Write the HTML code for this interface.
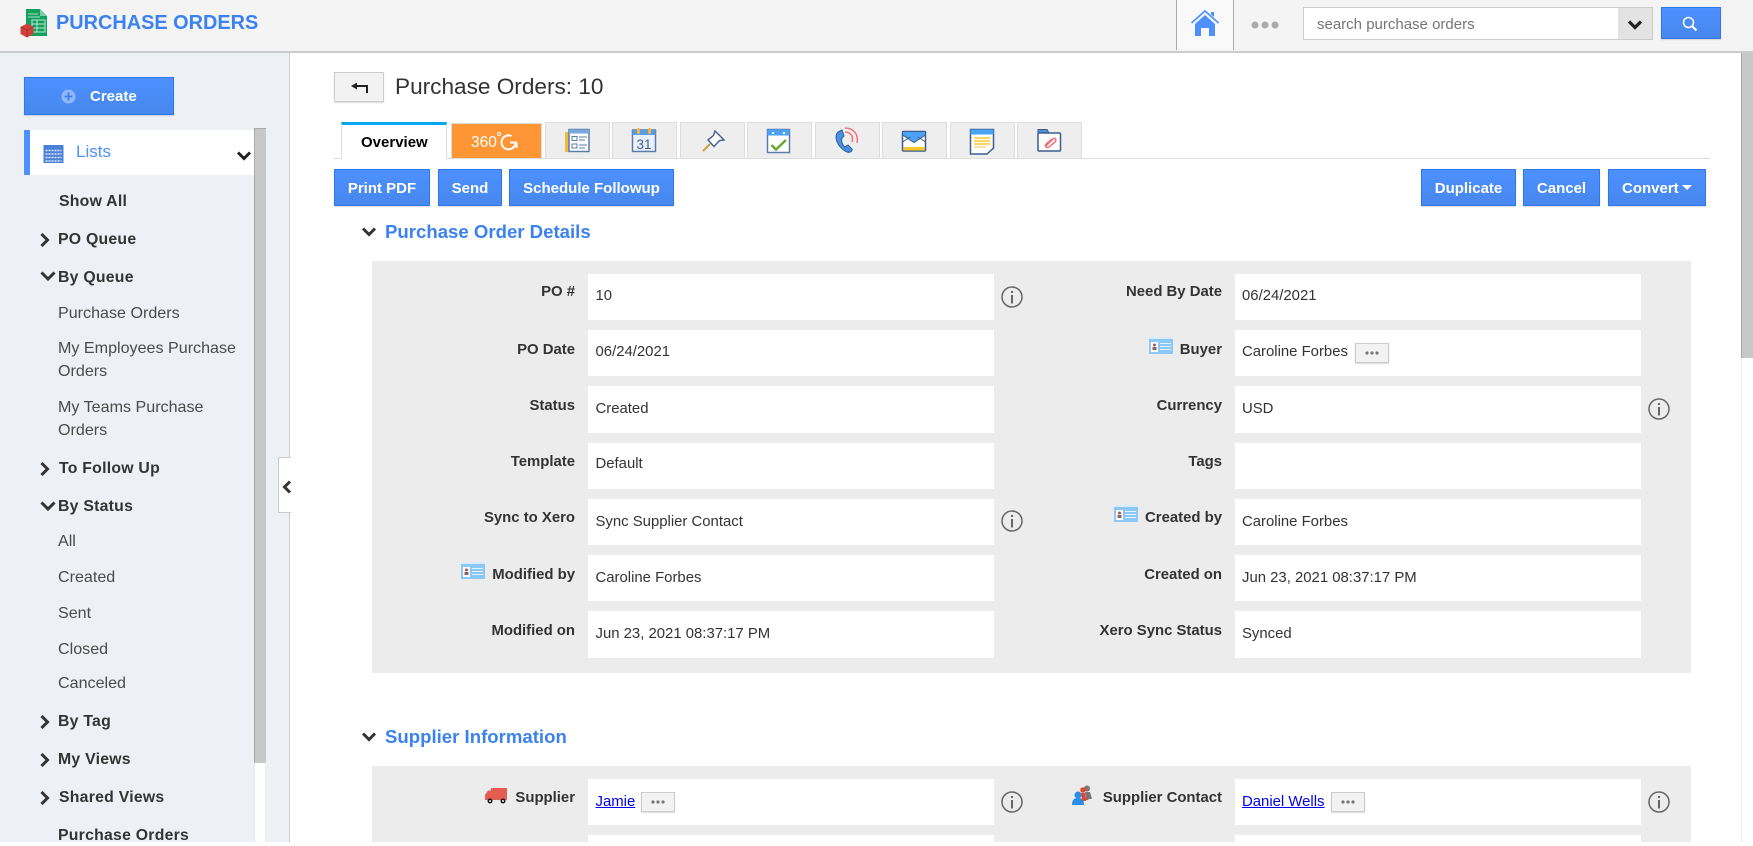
<!DOCTYPE html>
<html><head><meta charset="utf-8"><title>Purchase Orders</title>
<style>
*{box-sizing:border-box}
html,body{margin:0;padding:0;width:1753px;height:842px;overflow:hidden;background:#fff;font-family:"Liberation Sans",Arial,sans-serif;color:#333}
.a{position:absolute}
.t{position:absolute;white-space:nowrap;line-height:20px}
.btn{position:absolute;top:169px;height:37px;background:linear-gradient(#4d90fe,#4787ed);border:1px solid #3079ed;color:#fff;font-weight:bold;font-size:15px;line-height:37px;text-align:center;box-shadow:0 1px 1px rgba(0,0,0,.15)}
.tab{position:absolute;top:122px;height:36px;width:65px;background:#eee;border:1px solid #ddd;border-bottom:0}
.tab svg{position:absolute;left:-1px;top:-1px}
.sb{position:absolute;left:58px;font-weight:bold;font-size:15.8px;line-height:20px;white-space:nowrap;color:#333;letter-spacing:.25px}
.si{position:absolute;left:58px;font-size:16.1px;line-height:20px;white-space:nowrap;color:#4a4a4a}
.ch{position:absolute}
.f{position:absolute;background:#fff;height:46px}
.c1{left:588px;width:406px}
.c2{left:1235px;width:406px}
.v{position:absolute;font-size:14.9px;line-height:20px;white-space:nowrap;color:#333}
.l{position:absolute;font-size:14.9px;font-weight:bold;line-height:20px;white-space:nowrap;color:#333;text-align:right;width:200px}
.l1{left:375px}
.l2{left:1022px}
.v1{left:595.5px}
.v2{left:1242px}
.dots{position:absolute;width:34px;height:20px;background:#f2f2f2;border:1px solid #ccc;box-shadow:0 1px 1px rgba(0,0,0,.15)}
.dots svg{position:absolute;left:9px;top:6px}
.info{position:absolute}
h2{position:absolute;margin:0;font-size:18.6px;font-weight:bold;line-height:24px;color:#3b82f0;white-space:nowrap}
a{color:#00e;text-decoration:underline}
</style></head>
<body>

<!-- header -->
<div class="a" style="left:0;top:0;width:1753px;height:53px;background:#f4f4f4;border-bottom:2px solid #ccc"></div>
<svg class="a" style="left:20px;top:8px" width="28" height="30" viewBox="0 0 28 30">
<path d="M6 1H20L27 8V28H6Z" fill="#12a05c"/><path d="M20 1L27 8H20Z" fill="#7fcca8"/>
<path d="M8 6H18M8 9H20" stroke="#a8e0c4" stroke-width="1"/>
<rect x="12" y="12" width="13" height="12" fill="none" stroke="#bfe9d4" stroke-width="1"/>
<path d="M12 16H25M12 20H25M17 12V24" stroke="#bfe9d4" stroke-width="1"/>
<path d="M0.500 19L7 15.500L13.500 19V26L7 29.500L.5 26Z" fill="#d0423b"/>
<path d="M.5 19L7 22L13.500 19M7 22V29" stroke="#a52a25" stroke-width=".8" fill="none"/>
</svg>
<div class="t" style="left:56px;top:13px;font-size:19.9px;font-weight:bold;color:#3b82f0">PURCHASE ORDERS</div>

<div class="a" style="left:1176px;top:0;width:58px;height:50px;background:#f9f9f9;border-left:1px solid #aaa;border-right:1px solid #aaa"></div>
<svg class="a" style="left:1190px;top:9px" width="30" height="28" viewBox="0 0 30 28">
<path d="M1.500 14L15 2L28.500 14" fill="none" stroke="#4d90fe" stroke-width="1.600"/>
<path d="M21 3H24V8L21 5.500Z" fill="#4d90fe"/>
<path d="M5 15L15 6L25 15V27H19V19H11V27H5Z" fill="#4d90fe"/>
</svg>
<svg class="a" style="left:1251px;top:21px" width="28" height="8" viewBox="0 0 28 8"><circle cx="4" cy="4" r="3.500" fill="#aaa"/><circle cx="14" cy="4" r="3.500" fill="#aaa"/><circle cx="24" cy="4" r="3.500" fill="#aaa"/></svg>
<div class="a" style="left:1303px;top:7px;width:316px;height:33px;background:#fff;border:1px solid #ccc"></div>
<div class="a" style="left:1618px;top:7px;width:35px;height:33px;background:#e3e3e3;border:1px solid #ccc;border-left:0"></div>
<svg class="a" style="left:1627px;top:19px" width="16" height="12" viewBox="0 0 16 12"><path d="M2 2.500L8 8.500L14 2.500" fill="none" stroke="#222" stroke-width="3.200"/></svg>
<div class="t" style="left:1317px;top:15px;font-size:15px;color:#757575">search purchase orders</div>
<div class="a" style="left:1661px;top:7px;width:60px;height:32px;background:linear-gradient(#4d90fe,#4787ed);border:1px solid #3079ed;box-shadow:0 1px 1px rgba(0,0,0,.15)"></div>
<svg class="a" style="left:1682px;top:16px" width="16" height="16" viewBox="0 0 16 16"><circle cx="6.500" cy="6.500" r="5" fill="none" stroke="#fff" stroke-width="1.500"/><path d="M10 10L14.500 14.500" stroke="#fff" stroke-width="2"/></svg>

<!-- sidebar -->
<div class="a" style="left:0;top:53px;width:290px;height:789px;background:#edf0f5;border-right:1px solid #ccc"></div>
<div class="a" style="left:24px;top:77px;width:150px;height:38px;background:linear-gradient(#4d90fe,#4787ed);border:1px solid #3079ed;box-shadow:0 1px 1px rgba(0,0,0,.15)"></div>
<svg class="a" style="left:61px;top:89px" width="15" height="15" viewBox="0 0 15 15"><circle cx="7.500" cy="7.500" r="7" fill="#8fb8fb"/><path d="M7.500 3.500V11.500M3.500 7.500H11.500" stroke="#3f7fe8" stroke-width="1.800"/></svg>
<div class="t" style="left:90px;top:87px;font-size:15px;font-weight:bold;color:#fff">Create</div>

<div class="a" style="left:24px;top:130px;width:230px;height:45px;background:#fff;border-left:6px solid #4d90fe"></div>
<svg class="a" style="left:43px;top:145px" width="21" height="18" viewBox="0 0 21 18"><rect width="20" height="18" x=".5" fill="#4a80d8"/><path d="M2.500 5.500H18.500M2.500 9H18.500M2.500 12.500H18.500M2.500 16H18.500" stroke="#dfe9fb" stroke-width="1.500" stroke-dasharray="2 1"/></svg>
<div class="t" style="left:76px;top:142px;font-size:17px;color:#4d90fe;line-height:20px">Lists</div>
<svg class="a" style="left:236px;top:149px" width="16" height="14" viewBox="0 0 16 14"><path d="M2 3.500L8 9.500L14 3.500" fill="none" stroke="#222" stroke-width="3"/></svg>

<div class="a" style="left:254px;top:128px;width:12px;height:635px;background:#c8c8c8;border-left:1px solid #aaa;border-top:1px solid #aaa"></div>
<div class="a" style="left:254px;top:763px;width:11px;height:79px;background:#fff;border-left:1px solid #e4e6ea"></div>

<div class="sb" style="left:59px;top:192px">Show All</div>
<div class="sb" style="top:230px">PO Queue</div>
<div class="sb" style="top:268px">By Queue</div>
<div class="si" style="top:303px">Purchase Orders</div>
<div class="si" style="top:338px">My Employees Purchase</div>
<div class="si" style="top:361px">Orders</div>
<div class="si" style="top:397px">My Teams Purchase</div>
<div class="si" style="top:420px">Orders</div>
<div class="sb" style="left:59px;top:459px">To Follow Up</div>
<div class="sb" style="top:497px">By Status</div>
<div class="si" style="top:531px">All</div>
<div class="si" style="top:567px">Created</div>
<div class="si" style="top:603px">Sent</div>
<div class="si" style="top:639px">Closed</div>
<div class="si" style="top:673px">Canceled</div>
<div class="sb" style="top:712px">By Tag</div>
<div class="sb" style="top:750px">My Views</div>
<div class="sb" style="left:59px;top:788px">Shared Views</div>
<div class="sb" style="top:826px">Purchase Orders</div>

<svg class="ch" style="left:38.500px;top:232.500px" width="12" height="14" viewBox="0 0 12 14"><path d="M2.500 1L8.500 7L2.500 13" fill="none" stroke="#333" stroke-width="3"/></svg>
<svg class="ch" style="left:40px;top:271px" width="16" height="11" viewBox="0 0 16 11"><path d="M1.500 1.500L8 8L14.500 1.500" fill="none" stroke="#333" stroke-width="3"/></svg>
<svg class="ch" style="left:38.500px;top:461.500px" width="12" height="14" viewBox="0 0 12 14"><path d="M2.500 1L8.500 7L2.500 13" fill="none" stroke="#333" stroke-width="3"/></svg>
<svg class="ch" style="left:40px;top:501px" width="16" height="11" viewBox="0 0 16 11"><path d="M1.500 1.500L8 8L14.500 1.500" fill="none" stroke="#333" stroke-width="3"/></svg>
<svg class="ch" style="left:38.500px;top:714.500px" width="12" height="14" viewBox="0 0 12 14"><path d="M2.500 1L8.500 7L2.500 13" fill="none" stroke="#333" stroke-width="3"/></svg>
<svg class="ch" style="left:38.500px;top:752.500px" width="12" height="14" viewBox="0 0 12 14"><path d="M2.500 1L8.500 7L2.500 13" fill="none" stroke="#333" stroke-width="3"/></svg>
<svg class="ch" style="left:38.500px;top:790.500px" width="12" height="14" viewBox="0 0 12 14"><path d="M2.500 1L8.500 7L2.500 13" fill="none" stroke="#333" stroke-width="3"/></svg>

<div class="a" style="left:278px;top:457px;width:13px;height:56px;background:#fff;border:1px solid #ccc;border-right:0"></div>
<svg class="a" style="left:281px;top:480px" width="12" height="14" viewBox="0 0 12 14"><path d="M9 1.500L3.500 7L9 12.500" fill="none" stroke="#333" stroke-width="3"/></svg>

<!-- page scrollbar -->
<div class="a" style="left:1741px;top:53px;width:12px;height:789px;background:#fff;border-left:1px solid #e8e8e8"></div>
<div class="a" style="left:1741px;top:53px;width:12px;height:305px;background:#c8c8c8;border-left:1px solid #aaa"></div>

<!-- title -->
<div class="a" style="left:334px;top:72px;width:50px;height:30px;background:#f2f2f2;border:1px solid #ccc;box-shadow:0 1px 1px rgba(0,0,0,.15)"></div>
<svg class="a" style="left:351px;top:82px" width="18" height="12" viewBox="0 0 18 12"><path d="M0 4L6 .5V7.500Z" fill="#222"/><path d="M5 4H16V11" fill="none" stroke="#222" stroke-width="2"/></svg>
<div class="t" style="left:395px;top:77px;font-size:22.6px;color:#333">Purchase Orders: 10</div>

<!-- tabs -->
<div class="a" style="left:334px;top:158px;width:1376px;height:1px;background:#ddd"></div>
<div class="a" style="left:341px;top:122px;width:106px;height:37px;background:#fff;border:1px solid #ddd;border-top:3px solid #00a8f0;border-bottom:0"></div>
<div class="t" style="left:361px;top:133px;font-size:15px;font-weight:bold;color:#000">Overview</div>
<div class="a" style="left:451px;top:123px;width:91px;height:35px;background:#ff9636;border:1px solid #ddd;border-bottom:0"></div>
<div class="t" style="left:471px;top:133px;font-size:15.500px;color:#fff">360</div>
<svg class="a" style="left:496px;top:131px" width="24" height="22" viewBox="0 0 24 22"><circle cx="3" cy="3" r="1.500" fill="none" stroke="#fff"/><path d="M19.500 12A7 7 0 1 1 15.500 5" fill="none" stroke="#fff" stroke-width="2"/><path d="M14 11.500H21M20.500 11.500V17" fill="none" stroke="#fff" stroke-width="2"/></svg>

<div class="tab" style="left:545px"><svg width="65" height="36" viewBox="0 0 65 36"><rect x="20" y="10" width="5" height="20" rx="1" fill="#f5b83d"/><rect x="24" y="7.500" width="20" height="22" fill="#fff" stroke="#5a7ca8" stroke-width="1.500"/><rect x="24" y="7.500" width="20" height="4" fill="#7aa7dc"/><path d="M27 14.500h5v4h-5zM27 22h5v4h-5z" fill="none" stroke="#5a7ca8"/><path d="M34 15H42M34 18H40M34 23H42M34 26H40" stroke="#5a7ca8"/></svg></div>
<div class="tab" style="left:612px"><svg width="65" height="36" viewBox="0 0 65 36"><rect x="20.500" y="8" width="23" height="21.500" fill="#eaf1fa" stroke="#5a7ca8" stroke-width="1.500"/><rect x="20.500" y="8" width="23" height="5" fill="#5a9ee8"/><rect x="25" y="6" width="3" height="6" rx="1.500" fill="#f5b83d"/><rect x="36" y="6" width="3" height="6" rx="1.500" fill="#f5b83d"/><text x="32" y="27" font-size="13.500" text-anchor="middle" fill="#3d5f8a" font-family="Liberation Sans">31</text></svg></div>
<div class="tab" style="left:680px"><svg width="65" height="36" viewBox="0 0 65 36"><path d="M35 9L44 18L39.500 18.500L34 24.500L28 18L33.500 13.500Z" fill="#fff" stroke="#3d5f8a" stroke-width="1.400"/><path d="M30 22L23 29" stroke="#c9a33d" stroke-width="2"/></svg></div>
<div class="tab" style="left:747px"><svg width="65" height="36" viewBox="0 0 65 36"><rect x="20.500" y="7.500" width="22" height="23" fill="#fff" stroke="#5a7ca8" stroke-width="1.500"/><rect x="20.500" y="7.500" width="22" height="6" fill="#4aa3f5"/><rect x="25" y="10" width="2" height="2" fill="#fff"/><rect x="36" y="10" width="2" height="2" fill="#fff"/><path d="M24.500 23L29 27.500L39 18" fill="none" stroke="#6aa834" stroke-width="2.500"/></svg></div>
<div class="tab" style="left:815px"><svg width="65" height="36" viewBox="0 0 65 36"><path d="M23 10C19 14 21 23 30 29C34 32 38 29 37 27L33 23L30 25C27 23 26 19 27 16L29 14L27 8Z" fill="#4a8fe0" stroke="#2d5f9e"/><path d="M30 6C38 6 44 12 42 21" fill="none" stroke="#f0707c" stroke-width="1.500"/><path d="M30 10C35 10 39 14 37 20" fill="none" stroke="#f0707c" stroke-width="1.500"/></svg></div>
<div class="tab" style="left:882px"><svg width="65" height="36" viewBox="0 0 65 36"><rect x="20.500" y="9.500" width="23" height="19.500" rx="1" fill="#fff" stroke="#3d5f8a" stroke-width="1.500"/><path d="M20.500 9.500H43.500V13L32 20.500L20.500 13Z" fill="#4aa3f5" stroke="#3d5f8a"/><path d="M20.500 20L28 15M43.500 20L36 15" stroke="#3d5f8a" fill="none"/><rect x="21.500" y="25" width="21" height="3.500" fill="#fcc72e"/></svg></div>
<div class="tab" style="left:950px"><svg width="65" height="36" viewBox="0 0 65 36"><path d="M20.500 7.500H43.500V26L37 32H20.500Z" fill="#fff" stroke="#3d5f8a" stroke-width="1.500"/><rect x="20.500" y="7.500" width="23" height="5" fill="#4aa3f5"/><path d="M24 16H40M24 19H40M24 22H40" stroke="#fcc72e" stroke-width="1.500"/><path d="M24 25H36" stroke="#fad98a" stroke-width="1.500"/></svg></div>
<div class="tab" style="left:1017px"><svg width="65" height="36" viewBox="0 0 65 36"><path d="M21 7.500H30L32 11H21Z" fill="#4a8fe0" stroke="#3d5f8a"/><rect x="21" y="11" width="22.500" height="18" rx="1" fill="#fff" stroke="#3d5f8a" stroke-width="1.500"/><path d="M28 25L36 17C38 15 40 18 38 20L32 25C30 27 27 24 29 22L35 17" fill="none" stroke="#f0707c" stroke-width="1.500"/></svg></div>

<!-- action buttons -->
<div class="btn" style="left:334px;width:96px">Print PDF</div>
<div class="btn" style="left:438px;width:64px">Send</div>
<div class="btn" style="left:509px;width:165px">Schedule Followup</div>
<div class="btn" style="left:1421px;width:95px">Duplicate</div>
<div class="btn" style="left:1523px;width:77px">Cancel</div>
<div class="btn" style="left:1608px;width:98px;text-align:left;padding-left:13px">Convert</div>
<svg class="a" style="left:1682px;top:185px" width="10" height="6" viewBox="0 0 10 6"><path d="M0 0H10L5 5Z" fill="#fff"/></svg>

<!-- section 1 -->
<svg class="a" style="left:361px;top:226px" width="16" height="12" viewBox="0 0 16 12"><path d="M2 2.500L8 8.500L14 2.500" fill="none" stroke="#333" stroke-width="3"/></svg>
<h2 style="left:385px;top:220px">Purchase Order Details</h2>
<div class="a" style="left:372px;top:261px;width:1319px;height:412px;background:#ececec"></div>

<div class="f c1" style="top:274px"></div><div class="f c2" style="top:274px"></div>
<div class="f c1" style="top:330px"></div><div class="f c2" style="top:330px"></div>
<div class="f c1" style="top:386px;height:47px"></div><div class="f c2" style="top:386px;height:47px"></div>
<div class="f c1" style="top:443px"></div><div class="f c2" style="top:443px"></div>
<div class="f c1" style="top:499px"></div><div class="f c2" style="top:499px"></div>
<div class="f c1" style="top:555px"></div><div class="f c2" style="top:555px"></div>
<div class="f c1" style="top:611px;height:47px"></div><div class="f c2" style="top:611px;height:47px"></div>

<div class="l l1" style="top:282px">PO #</div><div class="v v1" style="top:286px">10</div>
<div class="l l2" style="top:282px">Need By Date</div><div class="v v2" style="top:286px">06/24/2021</div>
<div class="l l1" style="top:340px">PO Date</div><div class="v v1" style="top:342px">06/24/2021</div>
<div class="l l2" style="top:340px">Buyer</div><div class="v v2" style="top:342px">Caroline Forbes</div>
<div class="l l1" style="top:396px">Status</div><div class="v v1" style="top:399px">Created</div>
<div class="l l2" style="top:396px">Currency</div><div class="v v2" style="top:399px">USD</div>
<div class="l l1" style="top:452px">Template</div><div class="v v1" style="top:454px">Default</div>
<div class="l l2" style="top:452px">Tags</div>
<div class="l l1" style="top:508px">Sync to Xero</div><div class="v v1" style="top:512px">Sync Supplier Contact</div>
<div class="l l2" style="top:508px">Created by</div><div class="v v2" style="top:512px">Caroline Forbes</div>
<div class="l l1" style="top:565px">Modified by</div><div class="v v1" style="top:568px">Caroline Forbes</div>
<div class="l l2" style="top:565px">Created on</div><div class="v v2" style="top:568px">Jun 23, 2021 08:37:17 PM</div>
<div class="l l1" style="top:621px">Modified on</div><div class="v v1" style="top:624px">Jun 23, 2021 08:37:17 PM</div>
<div class="l l2" style="top:621px">Xero Sync Status</div><div class="v v2" style="top:624px">Synced</div>

<div class="dots" style="left:1355px;top:343px"><svg width="14" height="6" viewBox="0 0 14 6"><circle cx="2" cy="3" r="1.600" fill="#777"/><circle cx="7" cy="3" r="1.600" fill="#777"/><circle cx="12" cy="3" r="1.600" fill="#777"/></svg></div>

<svg class="a" style="left:1149px;top:337px" width="24" height="17" viewBox="0 0 24 17"><rect width="24" height="17" fill="#d8ecfb"/><rect y="2" width="24" height="15" fill="#8cc8f5"/><rect x="2" y="5" width="7" height="10" fill="#fff"/><circle cx="5.500" cy="8" r="1.500" fill="#a55"/><rect x="3.500" y="10" width="4" height="3" fill="#866"/><path d="M11 6.500H22M11 9.500H22M11 12.500H22" stroke="#e4f3fd" stroke-width="1"/></svg>
<svg class="a" style="left:1114px;top:505px" width="24" height="17" viewBox="0 0 24 17"><rect width="24" height="17" fill="#d8ecfb"/><rect y="2" width="24" height="15" fill="#8cc8f5"/><rect x="2" y="5" width="7" height="10" fill="#fff"/><circle cx="5.500" cy="8" r="1.500" fill="#a55"/><rect x="3.500" y="10" width="4" height="3" fill="#866"/><path d="M11 6.500H22M11 9.500H22M11 12.500H22" stroke="#e4f3fd" stroke-width="1"/></svg>
<svg class="a" style="left:461px;top:562px" width="24" height="17" viewBox="0 0 24 17"><rect width="24" height="17" fill="#d8ecfb"/><rect y="2" width="24" height="15" fill="#8cc8f5"/><rect x="2" y="5" width="7" height="10" fill="#fff"/><circle cx="5.500" cy="8" r="1.500" fill="#a55"/><rect x="3.500" y="10" width="4" height="3" fill="#866"/><path d="M11 6.500H22M11 9.500H22M11 12.500H22" stroke="#e4f3fd" stroke-width="1"/></svg>

<svg class="info" style="left:1001px;top:286px" width="22" height="22" viewBox="0 0 22 22"><circle cx="11" cy="11" r="10" fill="none" stroke="#666" stroke-width="1.500"/><rect x="10" y="9" width="2" height="8.500" fill="#666"/><rect x="10" y="5" width="2" height="2" fill="#666"/></svg>
<svg class="info" style="left:1001px;top:510px" width="22" height="22" viewBox="0 0 22 22"><circle cx="11" cy="11" r="10" fill="none" stroke="#666" stroke-width="1.500"/><rect x="10" y="9" width="2" height="8.500" fill="#666"/><rect x="10" y="5" width="2" height="2" fill="#666"/></svg>
<svg class="info" style="left:1648px;top:398px" width="22" height="22" viewBox="0 0 22 22"><circle cx="11" cy="11" r="10" fill="none" stroke="#666" stroke-width="1.500"/><rect x="10" y="9" width="2" height="8.500" fill="#666"/><rect x="10" y="5" width="2" height="2" fill="#666"/></svg>

<!-- section 2 -->
<svg class="a" style="left:361px;top:731px" width="16" height="12" viewBox="0 0 16 12"><path d="M2 2.500L8 8.500L14 2.500" fill="none" stroke="#333" stroke-width="3"/></svg>
<h2 style="left:385px;top:725px">Supplier Information</h2>
<div class="a" style="left:372px;top:766px;width:1319px;height:76px;background:#ececec"></div>
<div class="f c1" style="top:779px"></div><div class="f c2" style="top:779px"></div>
<div class="f c1" style="top:835px;height:7px"></div><div class="f c2" style="top:835px;height:7px"></div>
<div class="l l1" style="top:788px">Supplier</div>
<div class="l l2" style="top:788px">Supplier Contact</div>
<div class="v v1" style="top:792px"><a>Jamie</a></div>
<div class="v v2" style="top:792px"><a>Daniel Wells</a></div>
<div class="dots" style="left:641px;top:792px"><svg width="14" height="6" viewBox="0 0 14 6"><circle cx="2" cy="3" r="1.600" fill="#777"/><circle cx="7" cy="3" r="1.600" fill="#777"/><circle cx="12" cy="3" r="1.600" fill="#777"/></svg></div>
<div class="dots" style="left:1331px;top:792px"><svg width="14" height="6" viewBox="0 0 14 6"><circle cx="2" cy="3" r="1.600" fill="#777"/><circle cx="7" cy="3" r="1.600" fill="#777"/><circle cx="12" cy="3" r="1.600" fill="#777"/></svg></div>
<svg class="a" style="left:484px;top:787px" width="24" height="17" viewBox="0 0 24 17"><path d="M7 1H23V13H1V8L4 3.500H7Z" fill="#e35d52"/><circle cx="6" cy="14" r="2.500" fill="#111"/><circle cx="6" cy="14" r="1" fill="#eee"/><circle cx="19" cy="14" r="2.500" fill="#111"/><circle cx="19" cy="14" r="1" fill="#eee"/></svg>
<svg class="a" style="left:1071px;top:784px" width="22" height="22" viewBox="0 0 22 22"><circle cx="16" cy="4.500" r="3" fill="#777"/><path d="M14 8L19 8L21 15H15Z" fill="#777"/><circle cx="12" cy="6" r="2.800" fill="#e8432e"/><path d="M10 9H14L15 17H11Z" fill="#e8432e"/><path d="M14 13L18 16H13Z" fill="#e8432e"/><circle cx="7" cy="11" r="3.500" fill="#2a8de8"/><path d="M1 21C1 16 3 14 7 14C11 14 13 16 13 21Z" fill="#2a8de8"/></svg>
<svg class="info" style="left:1001px;top:791px" width="22" height="22" viewBox="0 0 22 22"><circle cx="11" cy="11" r="10" fill="none" stroke="#666" stroke-width="1.500"/><rect x="10" y="9" width="2" height="8.500" fill="#666"/><rect x="10" y="5" width="2" height="2" fill="#666"/></svg>
<svg class="info" style="left:1648px;top:791px" width="22" height="22" viewBox="0 0 22 22"><circle cx="11" cy="11" r="10" fill="none" stroke="#666" stroke-width="1.500"/><rect x="10" y="9" width="2" height="8.500" fill="#666"/><rect x="10" y="5" width="2" height="2" fill="#666"/></svg>

</body></html>
